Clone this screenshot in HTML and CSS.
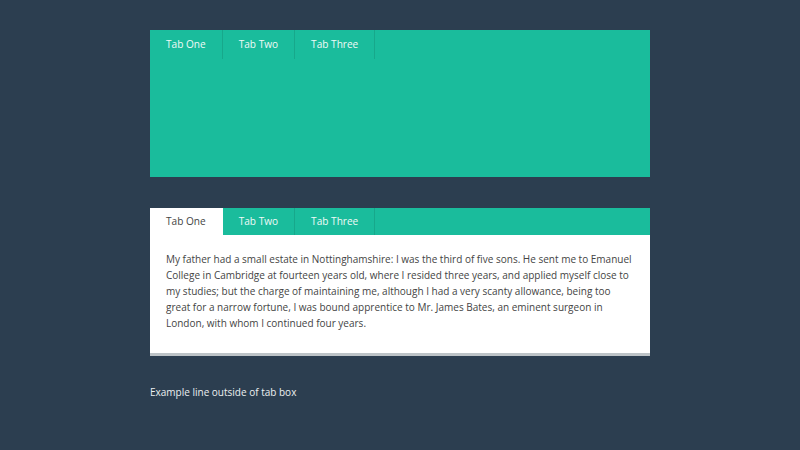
FILE: index.html
```html
<!DOCTYPE html>
<html lang="en">
<head>
  <meta charset="UTF-8">
  <title>Tabs</title>
  <link rel="stylesheet" href="styles.css">
</head>
<body>

  <div class="tab-box closed">
    <ul class="tabs">
      <li>Tab One</li>
      <li>Tab Two</li>
      <li>Tab Three</li>
    </ul>
  </div>

  <div class="tab-box open">
    <ul class="tabs">
      <li class="active">Tab One</li>
      <li>Tab Two</li>
      <li>Tab Three</li>
    </ul>
    <div class="panel">
      <p>My father had a small estate in Nottinghamshire: I was the third of five sons. He sent me to Emanuel College in Cambridge at fourteen years old, where I resided three years, and applied myself close to my studies; but the charge of maintaining me, although I had a very scanty allowance, being too great for a narrow fortune, I was bound apprentice to Mr. James Bates, an eminent surgeon in London, with whom I continued four years.</p>
    </div>
  </div>

  <p class="outside">Example line outside of tab box</p>

</body>
</html>
```

FILE: styles.css
```css
body {
  margin: 0;
  padding: 30px 150px;
  background: #2c3e50;
  font-family: 'Open Sans', sans-serif;
  font-size: 10px;
  color: #ecf0f1;
}

.tab-box {
  background: #1abc9c;
}

.tab-box.closed {
  height: 147px;
}

.tab-box.open {
  margin-top: 31px;
}

.tabs {
  list-style: none;
  margin: 0;
  padding: 0;
  display: flex;
}

.tabs li {
  padding: 0 16px;
  font-size: 10.1px;
  line-height: 29px;
  color: #f0faf7;
  border-right: 1px solid #17a88b;
}

.open .tabs li {
  line-height: 27px;
}

.tabs li.active {
  background: #fff;
  color: #444;
  border-right-color: #fff;
}

.panel {
  background: #fff;
  padding: 16px 16px 22px;
  border-bottom: 3px solid #bdc3c7;
}

.panel p {
  margin: 0;
  line-height: 16px;
  color: #444;
}

.outside {
  margin: 28px 0 0;
  line-height: 16px;
}
```
